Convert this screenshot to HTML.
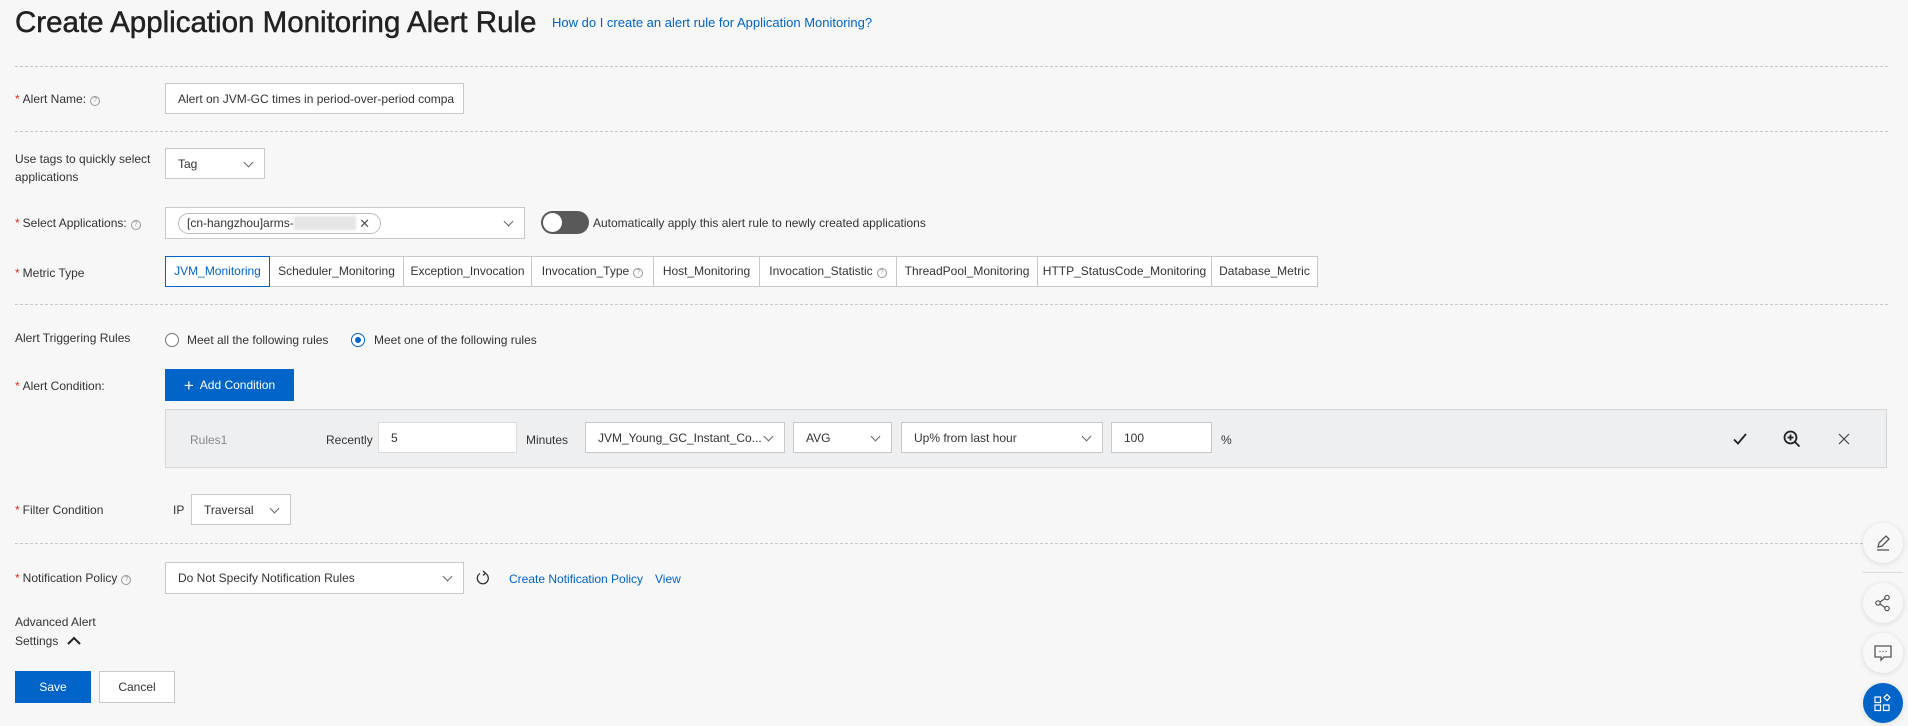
<!DOCTYPE html>
<html><head><meta charset="utf-8"><style>
*{box-sizing:border-box;margin:0;padding:0}
body{width:1908px;height:726px;background:#f7f7f7;font-family:"Liberation Sans",sans-serif;font-size:12px;color:#333;position:relative;overflow:hidden}
.a{position:absolute;white-space:nowrap}
.lbl{position:absolute;left:15px;font-size:12px;color:#333;line-height:16px}
.lbl .s{color:#d93026;margin-right:3px}
.q{display:inline-block;width:10px;height:10px;border:1px solid #999;border-radius:50%;font-size:7px;line-height:8px;text-align:center;color:#999;margin-left:4px;vertical-align:1px}
.dash{position:absolute;left:15px;right:20px;border-top:1px dashed #c8c8c8;height:0}
.box{position:absolute;background:#fff;border:1px solid #c9c9c9;height:32px;line-height:30px;padding-left:12px;font-size:12px;color:#333;white-space:nowrap;overflow:hidden}
.chev{position:absolute;right:12px;top:10px;width:7px;height:7px;border-right:1px solid #666;border-bottom:1px solid #666;transform:rotate(45deg)}
.tab{position:absolute;top:256px;height:31px;border:1px solid #c9c9c9;border-left:none;background:#fff;line-height:29px;text-align:center;font-size:12px;color:#333}
.link{color:#0064c8}
.btn{position:absolute;height:32px;line-height:32px;text-align:center;font-size:12px}
.fab{position:absolute;left:1863px;width:40px;height:40px;border-radius:50%;background:#f8f8f8;box-shadow:0 1px 6px rgba(0,0,0,.12)}
</style></head><body>

<div class="a" style="left:15px;top:5px;font-size:29.5px;line-height:36px;color:#222;-webkit-text-stroke:0.5px #222">Create Application Monitoring Alert Rule</div>
<div class="a link" style="left:552px;top:15px;font-size:13px;line-height:16px">How do I create an alert rule for Application Monitoring?</div>
<div class="dash" style="top:66px"></div>

<div class="lbl" style="top:91px"><span class="s">*</span>Alert Name:<span class="q">?</span></div>
<div class="box" style="left:165px;top:83px;width:299px;height:31px">Alert on JVM-GC times in period-over-period compa</div>
<div class="dash" style="top:131px"></div>

<div class="lbl" style="top:150px;line-height:18px">Use tags to quickly select<br>applications</div>
<div class="box" style="left:165px;top:148px;width:100px;height:31px">Tag<span class="chev"></span></div>

<div class="lbl" style="top:215px"><span class="s">*</span>Select Applications:<span class="q">?</span></div>
<div class="box" style="left:165px;top:207px;width:360px">
 <div class="a" style="left:12px;top:5px;width:203px;height:21px;border:1px solid #bbb;border-radius:11px;line-height:19px;padding-left:8px;color:#333">[cn-hangzhou]arms-<span style="display:inline-block;width:62px;height:14px;background:#e6e6e6;vertical-align:-3px;filter:blur(1px)"></span><span style="position:absolute;right:10px;color:#555;font-size:13px">✕</span></div>
 <span class="chev"></span></div>
<div class="a" style="left:541px;top:211px;width:48px;height:23px;border-radius:12px;background:#595959"><div style="position:absolute;left:2px;top:2px;width:19px;height:19px;border-radius:50%;background:#fff"></div></div>
<div class="a" style="left:593px;top:215px;line-height:16px">Automatically apply this alert rule to newly created applications</div>

<div class="lbl" style="top:265px"><span class="s">*</span>Metric Type</div>
<div class="tab" style="left:165px;width:105px;border:1px solid #0064c8;color:#0064c8;z-index:2">JVM_Monitoring</div>
<div class="tab" style="left:270px;width:134px">Scheduler_Monitoring</div>
<div class="tab" style="left:404px;width:128px">Exception_Invocation</div>
<div class="tab" style="left:532px;width:122px">Invocation_Type<span class="q">?</span></div>
<div class="tab" style="left:654px;width:106px">Host_Monitoring</div>
<div class="tab" style="left:760px;width:137px">Invocation_Statistic<span class="q">?</span></div>
<div class="tab" style="left:897px;width:141px">ThreadPool_Monitoring</div>
<div class="tab" style="left:1038px;width:174px">HTTP_StatusCode_Monitoring</div>
<div class="tab" style="left:1212px;width:106px">Database_Metric</div>
<div class="dash" style="top:304px"></div>

<div class="lbl" style="top:330px">Alert Triggering Rules</div>
<div class="a" style="left:165px;top:333px;width:14px;height:14px;border:1px solid #777;border-radius:50%;background:#fff"></div>
<div class="a" style="left:187px;top:332px;line-height:16px">Meet all the following rules</div>
<div class="a" style="left:351px;top:333px;width:14px;height:14px;border:1px solid #0064c8;border-radius:50%;background:#fff"><div style="position:absolute;left:3px;top:3px;width:6px;height:6px;border-radius:50%;background:#0064c8"></div></div>
<div class="a" style="left:374px;top:332px;line-height:16px">Meet one of the following rules</div>

<div class="lbl" style="top:378px"><span class="s">*</span>Alert Condition:</div>
<div class="btn" style="left:165px;top:369px;width:129px;background:#0064c8;color:#fff"><span style="font-size:17px;vertical-align:-2px;margin-right:6px">+</span>Add Condition</div>

<div class="a" style="left:165px;top:409px;width:1722px;height:59px;background:#eeeff1;border:1px solid #d6d6d6"></div>
<div class="a" style="left:190px;top:432px;color:#888;line-height:16px">Rules1</div>
<div class="a" style="left:326px;top:432px;line-height:16px">Recently</div>
<div class="box" style="left:378px;top:422px;width:139px;height:31px;border-color:#ddd">5</div>
<div class="a" style="left:526px;top:432px;line-height:16px">Minutes</div>
<div class="box" style="left:585px;top:422px;width:200px;height:31px">JVM_Young_GC_Instant_Co...<span class="chev"></span></div>
<div class="box" style="left:793px;top:422px;width:99px;height:31px">AVG<span class="chev"></span></div>
<div class="box" style="left:901px;top:422px;width:202px;height:31px">Up% from last hour<span class="chev"></span></div>
<div class="box" style="left:1111px;top:422px;width:101px;height:31px">100</div>
<div class="a" style="left:1221px;top:432px;line-height:16px">%</div>
<svg class="a" style="left:1731px;top:430px" width="18" height="18" viewBox="0 0 18 18"><path d="M3 9.5l4 4L15 4" fill="none" stroke="#222" stroke-width="1.8"/></svg>
<svg class="a" style="left:1782px;top:429px" width="20" height="20" viewBox="0 0 20 20"><circle cx="8.5" cy="8.5" r="6" fill="none" stroke="#222" stroke-width="1.8"/><path d="M13 13l4.5 4.5M8.5 5.5v6M5.5 8.5h6" stroke="#222" stroke-width="1.8"/></svg>
<svg class="a" style="left:1837px;top:432px" width="14" height="14" viewBox="0 0 14 14"><path d="M2 2l10 10M12 2L2 12" stroke="#444" stroke-width="1.2"/></svg>

<div class="lbl" style="top:502px"><span class="s">*</span>Filter Condition</div>
<div class="a" style="left:173px;top:502px;line-height:16px">IP</div>
<div class="box" style="left:191px;top:494px;width:100px;height:31px">Traversal<span class="chev"></span></div>
<div class="dash" style="top:543px;right:45px"></div>

<div class="lbl" style="top:570px"><span class="s">*</span>Notification Policy<span class="q">?</span></div>
<div class="box" style="left:165px;top:562px;width:299px">Do Not Specify Notification Rules<span class="chev"></span></div>
<svg class="a" style="left:475px;top:570px" width="16" height="16" viewBox="0 0 16 16"><path d="M10 3.2A5.5 5.5 0 1 1 5 3.5" fill="none" stroke="#333" stroke-width="1.3"/><path d="M8 1l2.5 2.3L8 5.5" fill="none" stroke="#333" stroke-width="1.3"/></svg>
<div class="a link" style="left:509px;top:571px;line-height:16px">Create Notification Policy</div>
<div class="a link" style="left:655px;top:571px;line-height:16px">View</div>

<div class="lbl" style="top:613px;line-height:19px">Advanced Alert<br>Settings <svg width="16" height="12" viewBox="0 0 16 12" style="vertical-align:-1px;margin-left:4px"><path d="M2 10l6-6 6 6" fill="none" stroke="#222" stroke-width="2"/></svg></div>

<div class="btn" style="left:15px;top:671px;width:76px;background:#0064c8;color:#fff">Save</div>
<div class="btn" style="left:99px;top:671px;width:76px;background:#fff;border:1px solid #c9c9c9;line-height:30px">Cancel</div>

<div class="fab" style="top:523px"><svg style="position:absolute;left:10px;top:10px" width="20" height="20" viewBox="0 0 20 20"><path d="M5 14l1-4 7-7 3 3-7 7z" fill="none" stroke="#555" stroke-width="1.3"/><path d="M4 17h12" stroke="#555" stroke-width="1.3"/></svg></div>
<div class="a" style="left:1863px;top:572px;width:40px;border-top:1px solid #d8d8e0"></div>
<div class="fab" style="top:583px"><svg style="position:absolute;left:10px;top:10px" width="20" height="20" viewBox="0 0 20 20"><circle cx="5" cy="10" r="2.2" fill="none" stroke="#555" stroke-width="1.2"/><circle cx="14" cy="4.5" r="2.2" fill="none" stroke="#555" stroke-width="1.2"/><circle cx="14" cy="15.5" r="2.2" fill="none" stroke="#555" stroke-width="1.2"/><path d="M7 9l5-3.5M7 11l5 3.5" stroke="#555" stroke-width="1.2"/></svg></div>
<div class="fab" style="top:633px"><svg style="position:absolute;left:10px;top:10px" width="20" height="20" viewBox="0 0 20 20"><path d="M2 3h16v11h-7l-3 3v-3H2z" fill="none" stroke="#555" stroke-width="1.3"/><path d="M6.5 8.5h1M9.5 8.5h1M12.5 8.5h1" stroke="#555" stroke-width="1.3"/></svg></div>
<div class="fab" style="top:683px;background:#0064c8"><svg style="position:absolute;left:10px;top:10px" width="20" height="20" viewBox="0 0 20 20"><rect x="2" y="4" width="5.5" height="5.5" fill="none" stroke="#fff" stroke-width="1.2"/><rect x="2" y="12" width="5.5" height="5.5" fill="none" stroke="#fff" stroke-width="1.2"/><rect x="10.5" y="12" width="5.5" height="5.5" fill="none" stroke="#fff" stroke-width="1.2"/><path d="M14 1.5l3 3-3 3-3-3z" fill="none" stroke="#fff" stroke-width="1.2"/></svg></div>
</body></html>
